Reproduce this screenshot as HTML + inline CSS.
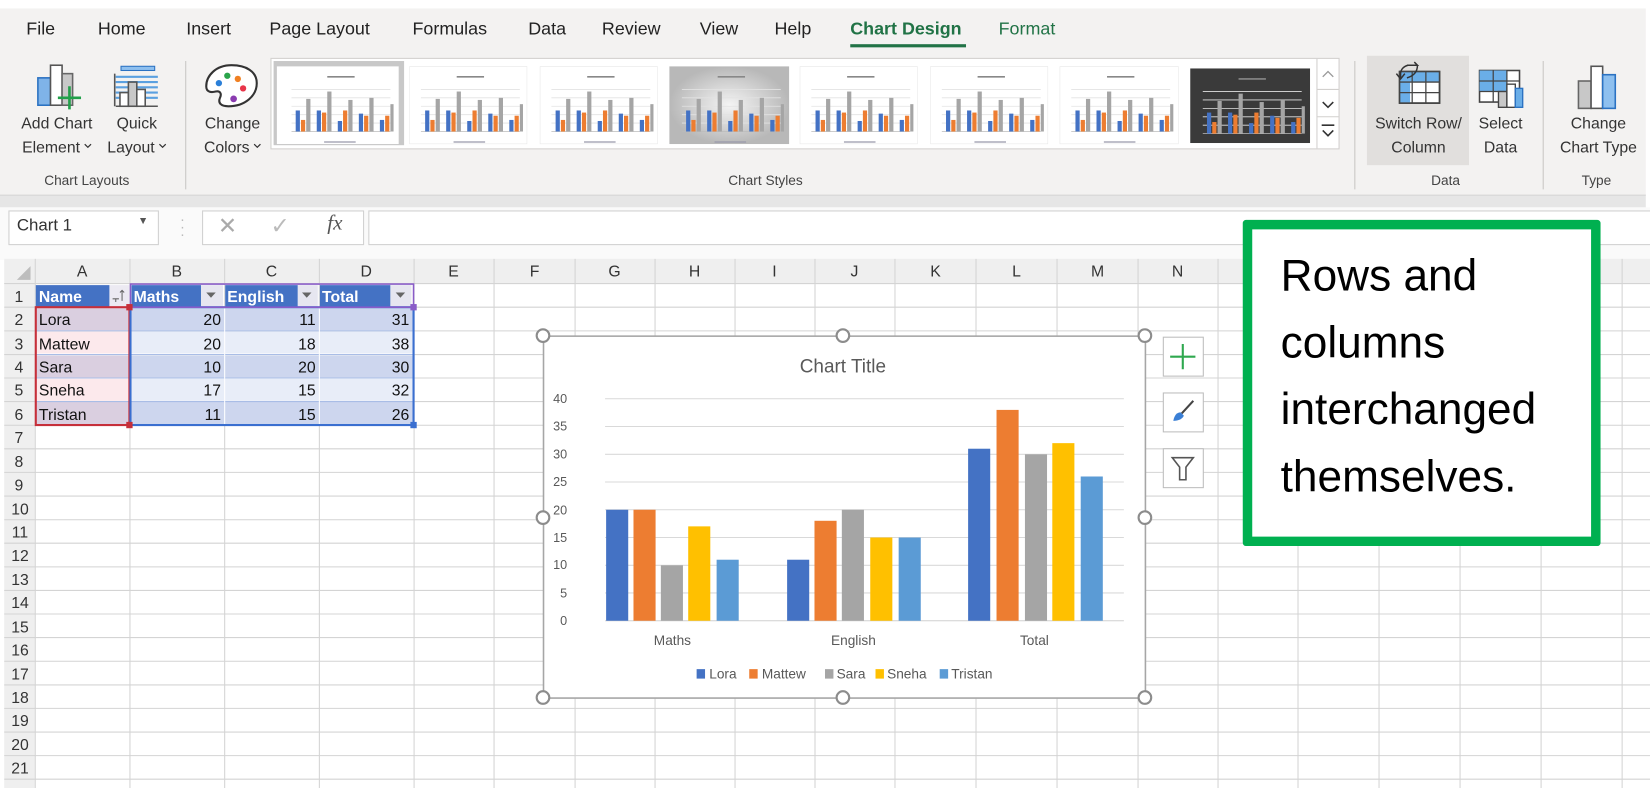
<!DOCTYPE html>
<html><head><meta charset="utf-8">
<style>
html,body{margin:0;padding:0;width:1650px;height:788px;overflow:hidden;background:#fff;}
#w{position:absolute;left:0;top:0;width:1568px;height:749px;transform:scale(1.0523,1.0521);transform-origin:0 0;font-family:"Liberation Sans",Arial,sans-serif;color:#333;}
.a{position:absolute;white-space:nowrap;}
.tab{position:absolute;top:18px;font-size:17px;color:#222;}
.rl{position:absolute;font-size:15px;color:#333;text-align:center;line-height:23px;}
.gl{position:absolute;top:164px;font-size:13px;color:#444;}
.cv{display:inline-block;width:7px;height:7px;margin-left:4px;vertical-align:3px;}
</style></head><body>
<div id="w">
<!-- ribbon -->
<div class="a" style="left:0;top:8px;width:1564px;height:177px;background:#f3f2f1;"></div>
<div class="a" style="left:0;top:185px;width:1564px;height:12px;background:#e6e6e6;border-top:1px solid #d6d6d6;"></div>
<div class="tab" style="left:25px">File</div>
<div class="tab" style="left:93px">Home</div>
<div class="tab" style="left:177px">Insert</div>
<div class="tab" style="left:256px">Page Layout</div>
<div class="tab" style="left:392px">Formulas</div>
<div class="tab" style="left:502px">Data</div>
<div class="tab" style="left:572px">Review</div>
<div class="tab" style="left:665px">View</div>
<div class="tab" style="left:736px">Help</div>
<div class="tab" style="left:808px;color:#217346;font-weight:bold">Chart Design</div>
<div class="a" style="left:808px;top:42px;width:110px;height:3px;background:#217346"></div>
<div class="tab" style="left:949px;color:#217346">Format</div>

<!-- ribbon icons -->
<svg class="a" style="left:0;top:0" width="1568" height="200">
 <rect x="36" y="74" width="12" height="26" fill="#7fb3e8" stroke="#2b72c2" stroke-width="1.5"/>
 <rect x="48" y="62" width="11" height="38" fill="#fff" stroke="#555" stroke-width="1.5"/>
 <rect x="59" y="70" width="10" height="30" fill="#c8c8c8" stroke="#666" stroke-width="1.5"/>
 <path d="M66 82v22M55 93h22" stroke="#21a04a" stroke-width="2.5"/>
 <rect x="115" y="63" width="32" height="4" fill="#8ec0ef" stroke="#2b72c2"/>
 <path d="M110 73h40M110 78h40M110 83h40M110 88h40M110 93h40" stroke="#5aa0e0" stroke-width="2"/>
 <path d="M109 70v31" stroke="#555" stroke-width="1.5"/>
 <rect x="114" y="88" width="8" height="13" fill="#fff" stroke="#555" stroke-width="1.5"/>
 <rect x="122" y="78" width="8" height="23" fill="#c8c8c8" stroke="#555" stroke-width="1.5"/>
 <rect x="130" y="85" width="8" height="16" fill="#fff" stroke="#555" stroke-width="1.5"/>
 <path d="M110 101h40" stroke="#555" stroke-width="1.5"/>
 <path d="M176.5 58v122M1287.5 58v122M1466.5 58v122" stroke="#c8c6c4"/>
 <path d="M220 62c-15 0-24 10-24 20 0 6 5 6 9 5 4-1 6 2 4 6-2 5 1 8 8 8 16 0 27-10 27-22 0-11-10-17-24-17z" fill="#fff" stroke="#333" stroke-width="2"/>
 <circle cx="208" cy="79" r="3" fill="#2b7fd8"/><circle cx="216" cy="72" r="3" fill="#2aa44a"/>
 <circle cx="226" cy="75" r="3" fill="#f08022"/><circle cx="231" cy="84" r="3" fill="#e8354a"/>
 <circle cx="222" cy="94" r="3.2" fill="#8a3bb0"/>
 <rect x="257.5" y="55.5" width="1015" height="86" fill="#fff" stroke="#d2d0ce"/>
 <rect x="260" y="58" width="124" height="80" fill="#c8c8c8"/>
 <path d="M1251.5 56v85M1252 85h20M1252 111h20" stroke="#d2d0ce"/>
 <path d="M1257 73l5-5 5 5" fill="none" stroke="#999" stroke-width="1.3"/>
 <path d="M1257 97l5 5 5-5" fill="none" stroke="#333" stroke-width="1.5"/>
 <path d="M1256 119h12M1257 124l5 5 5-5" fill="none" stroke="#333" stroke-width="1.5"/>
 <rect x="1299" y="53" width="97" height="104" fill="#e1dfdd"/>
 <rect x="1330" y="68" width="38" height="30" fill="#fff" stroke="#444" stroke-width="1.5"/>
 <rect x="1330" y="68" width="38" height="10" fill="#6aaee8"/><rect x="1330" y="68" width="10" height="30" fill="#6aaee8"/>
 <path d="M1330 78h38M1330 88h38M1342 68v30M1355 68v30" stroke="#444" stroke-width="1.2"/>
 <rect x="1330" y="68" width="38" height="30" fill="none" stroke="#444" stroke-width="1.5"/>
 <path d="M1337 62h10l-3-3M1347 62c0 6-3 10-10 12M1327 70l4 5 4-5M1331 75v-5c0-4 3-7 7-8" fill="none" stroke="#333" stroke-width="1.4"/>
 <rect x="1406" y="67" width="38" height="30" fill="#fff" stroke="#444" stroke-width="1.5"/>
 <rect x="1406" y="67" width="26" height="20" fill="#6aaee8"/>
 <path d="M1406 77h38M1406 87h38M1419 67v30M1432 67v30" stroke="#444" stroke-width="1.2"/>
 <rect x="1424" y="87" width="8" height="15" fill="#c8c8c8" stroke="#444" stroke-width="1.3"/>
 <rect x="1432" y="80" width="8" height="22" fill="#fff" stroke="#444" stroke-width="1.3"/>
 <rect x="1440" y="84" width="7" height="18" fill="#6aaee8" stroke="#2b72c2" stroke-width="1.3"/>
 <rect x="1500" y="77" width="12" height="26" fill="#c8c8c8" stroke="#666" stroke-width="1.5"/>
 <rect x="1512" y="63" width="11" height="40" fill="#fff" stroke="#555" stroke-width="1.5"/>
 <rect x="1523" y="71" width="12" height="32" fill="#8ec0ef" stroke="#2b72c2" stroke-width="1.5"/>
</svg>
<svg width="0" height="0" style="position:absolute">
 <defs>
  <g id="th">
   <path d="M14 22h94M14 30h94M14 38h94M14 46h94M14 54h94" stroke="#e2e2e2" stroke-width=".8"/>
   <path d="M14 62h94" stroke="#bbb" stroke-width=".8"/>
   <rect x="18" y="42" width="4" height="20" fill="#4472c4"/><rect x="23" y="51" width="4" height="11" fill="#ed7d31"/><rect x="28" y="31" width="4" height="31" fill="#a5a5a5"/>
   <rect x="38" y="42" width="4" height="20" fill="#4472c4"/><rect x="43" y="44" width="4" height="18" fill="#ed7d31"/><rect x="48" y="24" width="4" height="38" fill="#a5a5a5"/>
   <rect x="58" y="52" width="4" height="10" fill="#4472c4"/><rect x="63" y="42" width="4" height="20" fill="#ed7d31"/><rect x="68" y="32" width="4" height="30" fill="#a5a5a5"/>
   <rect x="78" y="45" width="4" height="17" fill="#4472c4"/><rect x="83" y="47" width="4" height="15" fill="#ed7d31"/><rect x="88" y="30" width="4" height="32" fill="#a5a5a5"/>
   <rect x="98" y="51" width="4" height="11" fill="#4472c4"/><rect x="103" y="47" width="4" height="15" fill="#ed7d31"/><rect x="108" y="36" width="3" height="26" fill="#a5a5a5"/>
   <path d="M48 10h26" stroke="#888" stroke-width="1.5"/>
   <path d="M45 72h30" stroke="#99a" stroke-width="1.2"/>
  </g>
 </defs>
</svg>
<svg class="a" style="left:263px;top:63px" width="116" height="74"><rect width="116" height="74" fill="#fff"/><use href="#th"/></svg>
<svg class="a" style="left:389px;top:63px" width="112" height="74"><rect width="112" height="74" fill="#fff" stroke="#e6e6e6"/><use href="#th" transform="translate(-3,0)"/></svg>
<svg class="a" style="left:513px;top:63px" width="112" height="74"><rect width="112" height="74" fill="#fff" stroke="#e6e6e6"/><use href="#th" transform="translate(-3,0)"/></svg>
<svg class="a" style="left:636px;top:63px" width="114" height="74"><defs><radialGradient id="rg"><stop offset="0" stop-color="#f4f4f4"/><stop offset="1" stop-color="#b8b8b8"/></radialGradient></defs><rect width="114" height="74" fill="url(#rg)"/><use href="#th" transform="translate(-2,0)"/></svg>
<svg class="a" style="left:760px;top:63px" width="112" height="74"><rect width="112" height="74" fill="#fff" stroke="#e6e6e6"/><use href="#th" transform="translate(-3,0)"/></svg>
<svg class="a" style="left:884px;top:63px" width="112" height="74"><rect width="112" height="74" fill="#fff" stroke="#e6e6e6"/><use href="#th" transform="translate(-3,0)"/></svg>
<svg class="a" style="left:1007px;top:63px" width="113" height="74"><rect width="113" height="74" fill="#fff" stroke="#e6e6e6"/><use href="#th" transform="translate(-3,0)"/></svg>
<svg class="a" style="left:1131px;top:65px" width="114" height="71"><rect width="114" height="71" fill="#3a3a3a"/><use href="#th" transform="translate(-2,0)"/></svg>

<div class="rl" style="left:8px;top:106px;width:92px">Add Chart<br>Element<svg class="cv" viewBox="0 0 7 7"><path d="M0.5 2l3 3 3-3" fill="none" stroke="#333" stroke-width="1.2"/></svg></div>
<div class="rl" style="left:98px;top:106px;width:64px">Quick<br>Layout<svg class="cv" viewBox="0 0 7 7"><path d="M0.5 2l3 3 3-3" fill="none" stroke="#333" stroke-width="1.2"/></svg></div>
<div class="rl" style="left:183px;top:106px;width:76px">Change<br>Colors<svg class="cv" viewBox="0 0 7 7"><path d="M0.5 2l3 3 3-3" fill="none" stroke="#333" stroke-width="1.2"/></svg></div>
<div class="rl" style="left:1297px;top:106px;width:102px">Switch Row/<br>Column</div>
<div class="rl" style="left:1398px;top:106px;width:56px">Select<br>Data</div>
<div class="rl" style="left:1474px;top:106px;width:90px">Change<br>Chart Type</div>
<div class="gl" style="left:42px">Chart Layouts</div>
<div class="gl" style="left:692px">Chart Styles</div>
<div class="gl" style="left:1360px">Data</div>
<div class="gl" style="left:1503px">Type</div>

<div class="a" style="left:0;top:197px;width:1568px;height:50px;background:#fafafa;"></div>
<div class="a" style="left:8px;top:200px;width:141px;height:31px;background:#fff;border:1px solid #d0d0d0;"></div>
<div class="a" style="left:16px;top:206px;font-size:16px;color:#333">Chart 1</div>
<div class="a" style="left:131px;top:205px;font-size:10px;color:#555">▼</div>
<div class="a" style="left:171px;top:205px;color:#bbb;font-size:14px;line-height:7px">·<br>·<br>·</div>
<div class="a" style="left:192px;top:200px;width:152px;height:31px;background:#fff;border:1px solid #d0d0d0;"></div>
<div class="a" style="left:207px;top:202px;font-size:22px;color:#aaa">✕</div>
<div class="a" style="left:257px;top:202px;font-size:22px;color:#bbb">✓</div>
<div class="a" style="left:311px;top:201px;font-size:20px;color:#555;font-family:'Liberation Serif',serif;font-style:italic">fx</div>
<div class="a" style="left:350px;top:200px;width:1218px;height:31px;background:#fff;border:1px solid #d0d0d0;"></div>

<svg class="a" style="left:0;top:240px" width="1568" height="509">
 <rect x="4" y="6" width="1564" height="24" fill="#efefef"/>
 <rect x="4" y="30" width="29" height="479" fill="#efefef"/>
 <path d="M29 13v13h-13z" fill="#bdbdbd"/>
 <g stroke="#d4d4d4" stroke-width="1">
  <path d="M33.5 6v503M123.5 6v503M213.5 6v503M303.5 6v503M393.5 6v503M469.5 6v503M546.5 6v503M622.5 6v503M698.5 6v503M774.5 6v503M850.5 6v503M927.5 6v503M1004.5 6v503M1081.5 6v503M1157.5 6v503M1233.5 6v503M1310.5 6v503M1387.5 6v503M1464.5 6v503M1541.5 6v503"/>
  <path d="M4 29.5h1564M4 52h1564M4 74.5h1564M4 97h1564M4 119.3h1564M4 141.7h1564M4 164.2h1564M4 186.6h1564M4 209h1564M4 231.5h1564M4 254h1564M4 276.3h1564M4 298.8h1564M4 321.2h1564M4 343.6h1564M4 366h1564M4 388.5h1564M4 411h1564M4 433.3h1564M4 455.8h1564M4 478.2h1564M4 500.6h1564"/>
 </g>
 <g font-size="15" fill="#333" text-anchor="middle" font-family="Liberation Sans,sans-serif">
  <text x="78" y="23">A</text><text x="168" y="23">B</text><text x="258" y="23">C</text><text x="348" y="23">D</text><text x="431" y="23">E</text><text x="508" y="23">F</text><text x="584" y="23">G</text><text x="660" y="23">H</text><text x="736" y="23">I</text><text x="812" y="23">J</text><text x="889" y="23">K</text><text x="966" y="23">L</text><text x="1043" y="23">M</text><text x="1119" y="23">N</text>
 </g>
 <g font-size="15" fill="#333" font-family="Liberation Sans,sans-serif" text-anchor="middle">
  <text x="18" y="47">1</text><text x="18" y="69">2</text><text x="18" y="92">3</text><text x="18" y="114">4</text><text x="18" y="136">5</text><text x="18" y="159">6</text><text x="18" y="181">7</text><text x="18" y="204">8</text><text x="18" y="226">9</text><text x="19" y="249">10</text><text x="19" y="271">11</text><text x="19" y="293">12</text><text x="19" y="316">13</text><text x="19" y="338">14</text><text x="19" y="361">15</text><text x="19" y="383">16</text><text x="19" y="406">17</text><text x="19" y="428">18</text><text x="19" y="450">19</text><text x="19" y="473">20</text><text x="19" y="495">21</text>
 </g>
 <rect x="34" y="31" width="70" height="21" fill="#4472c4"/>
 <rect x="104" y="31" width="19" height="21" fill="#eceaf2"/>
 <rect x="125" y="31" width="66" height="21" fill="#4472c4"/><rect x="191" y="31" width="21" height="21" fill="#e6e6f0"/>
 <rect x="214" y="31" width="69" height="21" fill="#4472c4"/><rect x="283" y="31" width="19" height="21" fill="#e6e6f0"/>
 <rect x="304" y="31" width="67" height="21" fill="#4472c4"/><rect x="371" y="31" width="20" height="21" fill="#e6e6f0"/>
 <g fill="#666"><path d="M196 38h9l-4.5 5z"/><path d="M287 38h9l-4.5 5z"/><path d="M376 38h9l-4.5 5z"/></g>
 <path d="M107 44h6M110 44v3M116 46v-10M114 38l2-2 2 2" stroke="#666" fill="none" stroke-width="1"/>
 <rect x="34" y="53" width="89" height="21" fill="#dacfe0"/><rect x="34" y="75" width="89" height="21" fill="#fce9ec"/>
 <rect x="34" y="98" width="89" height="21" fill="#dacfe0"/><rect x="34" y="120" width="89" height="21" fill="#fce9ec"/>
 <rect x="34" y="142" width="89" height="21" fill="#dacfe0"/>
 <rect x="124" y="53" width="269" height="21" fill="#cdd6ee"/><rect x="124" y="75" width="269" height="21" fill="#e8edf8"/>
 <rect x="124" y="98" width="269" height="21" fill="#cdd6ee"/><rect x="124" y="120" width="269" height="21" fill="#e8edf8"/>
 <rect x="124" y="142" width="269" height="21" fill="#cdd6ee"/>
 <path d="M124 74.5h269M124 97h269M124 119.3h269M124 141.7h269M34 74.5h89M34 97h89M34 119.3h89M34 141.7h89" stroke="#a9bde6" stroke-width="1"/>
 <path d="M213.5 53v110M303.5 53v110" stroke="#fff" stroke-width="1"/>
 <rect x="34" y="52" width="89" height="112" fill="none" stroke="#c62f3a" stroke-width="2"/>
 <rect x="124" y="52" width="269" height="112" fill="none" stroke="#3a6fd0" stroke-width="2"/>
 <rect x="124" y="30" width="269" height="22" fill="none" stroke="#8a5cc8" stroke-width="1.5"/>
 <rect x="120" y="49" width="6" height="6" fill="#c62f3a"/><rect x="120" y="161" width="6" height="6" fill="#c62f3a"/>
 <rect x="390" y="161" width="6" height="6" fill="#3a6fd0"/><rect x="390" y="49" width="6" height="6" fill="#8a5cc8"/>
 <g font-size="15" font-family="Liberation Sans,sans-serif">
  <g fill="#fff" font-weight="bold"><text x="37" y="47">Name</text><text x="127" y="47">Maths</text><text x="216" y="47">English</text><text x="306" y="47">Total</text></g>
  <g fill="#111"><text x="37" y="69">Lora</text><text x="37" y="92">Mattew</text><text x="37" y="114">Sara</text><text x="37" y="136">Sneha</text><text x="37" y="159">Tristan</text></g>
  <g fill="#111" text-anchor="end">
   <text x="210" y="69">20</text><text x="300" y="69">11</text><text x="389" y="69">31</text>
   <text x="210" y="92">20</text><text x="300" y="92">18</text><text x="389" y="92">38</text>
   <text x="210" y="114">10</text><text x="300" y="114">20</text><text x="389" y="114">30</text>
   <text x="210" y="136">17</text><text x="300" y="136">15</text><text x="389" y="136">32</text>
   <text x="210" y="159">11</text><text x="300" y="159">15</text><text x="389" y="159">26</text>
  </g>
 </g>
</svg>

<svg class="a" style="left:0;top:0" width="1568" height="749">
 <rect x="516.5" y="319.5" width="572" height="344" fill="#fff" stroke="#a6a6a6" stroke-width="1.5"/>
 <text x="801" y="354" text-anchor="middle" font-size="18" fill="#595959" font-family="Liberation Sans,sans-serif">Chart Title</text>
 <g stroke="#d9d9d9" stroke-width="1">
  <path d="M575 379h493M575 405.4h493M575 431.8h493M575 458.1h493M575 484.5h493M575 510.9h493M575 537.3h493M575 563.6h493"/>
 </g>
 <path d="M575 590h493" stroke="#d0d0d0" stroke-width="1"/>
 <g font-size="12" fill="#595959" text-anchor="end" font-family="Liberation Sans,sans-serif">
  <text x="539" y="383">40</text><text x="539" y="409">35</text><text x="539" y="436">30</text><text x="539" y="462">25</text><text x="539" y="489">20</text><text x="539" y="515">15</text><text x="539" y="541">10</text><text x="539" y="568">5</text><text x="539" y="594">0</text>
 </g>
 <rect x="576" y="484.5" width="21" height="105.5" fill="#4472c4"/>
 <rect x="602" y="484.5" width="21" height="105.5" fill="#ed7d31"/>
 <rect x="628" y="537.3" width="21" height="52.7" fill="#a5a5a5"/>
 <rect x="654" y="500.3" width="21" height="89.7" fill="#ffc000"/>
 <rect x="681" y="532" width="21" height="58" fill="#5b9bd5"/>
 <rect x="748" y="532" width="21" height="58" fill="#4472c4"/>
 <rect x="774" y="495" width="21" height="95" fill="#ed7d31"/>
 <rect x="800" y="484.5" width="21" height="105.5" fill="#a5a5a5"/>
 <rect x="827" y="510.9" width="21" height="79.1" fill="#ffc000"/>
 <rect x="854" y="510.9" width="21" height="79.1" fill="#5b9bd5"/>
 <rect x="920" y="426.5" width="21" height="163.5" fill="#4472c4"/>
 <rect x="947" y="389.6" width="21" height="200.4" fill="#ed7d31"/>
 <rect x="974" y="431.8" width="21" height="158.2" fill="#a5a5a5"/>
 <rect x="1000" y="421.2" width="21" height="168.8" fill="#ffc000"/>
 <rect x="1027" y="452.9" width="21" height="137.1" fill="#5b9bd5"/>
 <g font-size="13" fill="#595959" text-anchor="middle" font-family="Liberation Sans,sans-serif">
  <text x="639" y="613">Maths</text><text x="811" y="613">English</text><text x="983" y="613">Total</text>
 </g>
 <g font-size="13" fill="#595959" font-family="Liberation Sans,sans-serif">
  <rect x="662" y="636" width="8" height="9" fill="#4472c4"/><text x="674" y="645">Lora</text>
  <rect x="712" y="636" width="8" height="9" fill="#ed7d31"/><text x="724" y="645">Mattew</text>
  <rect x="784" y="636" width="8" height="9" fill="#a5a5a5"/><text x="795" y="645">Sara</text>
  <rect x="832" y="636" width="8" height="9" fill="#ffc000"/><text x="843" y="645">Sneha</text>
  <rect x="893" y="636" width="8" height="9" fill="#5b9bd5"/><text x="904" y="645">Tristan</text>
 </g>
 <g fill="#fff" stroke="#8c8c8c" stroke-width="2">
  <circle cx="516" cy="319" r="6"/><circle cx="801" cy="319" r="6"/><circle cx="1088" cy="319" r="6"/>
  <circle cx="516" cy="492" r="6"/><circle cx="1088" cy="492" r="6"/>
  <circle cx="516" cy="663" r="6"/><circle cx="801" cy="663" r="6"/><circle cx="1088" cy="663" r="6"/>
 </g>
 <g fill="#fff" stroke="#bdbdbd" stroke-width="1">
  <rect x="1105.5" y="320.5" width="38" height="37"/><rect x="1105.5" y="373.5" width="38" height="37"/><rect x="1105.5" y="426.5" width="38" height="37"/>
 </g>
 <path d="M1124 327v24M1112 339h24" stroke="#2fa84f" stroke-width="2"/>
 <path d="M1134 381l-11 12" stroke="#444" stroke-width="2"/>
 <path d="M1122 392c-4 0-6 3-7 8 5 0 9-2 10-5z" fill="#3a7fd5"/>
 <path d="M1114 435h20l-7 9v12h-6v-12z" fill="none" stroke="#555" stroke-width="1.5"/>
</svg>

<div class="a" style="left:1181px;top:209px;width:322px;height:292px;border:9px solid #00b050;border-radius:3px;background:#fff;"></div>
<div class="a" style="left:1217px;top:230px;font-size:42px;line-height:63.5px;color:#000;font-family:'Liberation Sans','DejaVu Sans',sans-serif">Rows and<br>columns<br>interchanged<br>themselves.</div>
</div>
</body></html>
